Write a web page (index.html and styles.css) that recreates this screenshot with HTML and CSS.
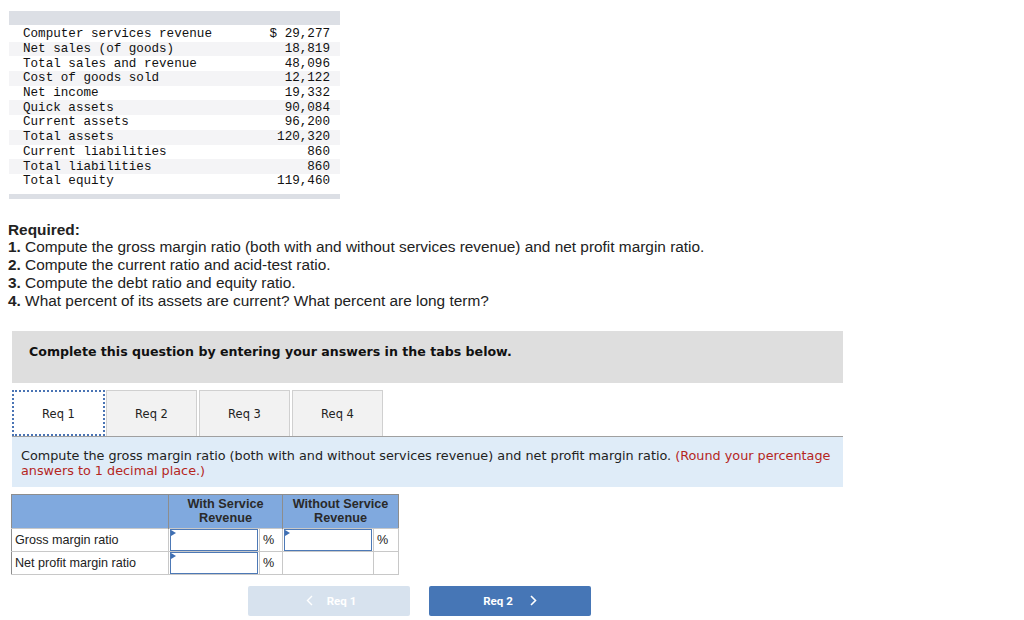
FILE: index.html
```html
<!DOCTYPE html>
<html lang="en">

<head>
    <meta charset="UTF-8">
    <meta name="viewport" content="width=device-width, initial-scale=1.0">
    <title>Ratio Analysis</title>
    <link rel="stylesheet" href="styles.css">
</head>

<body>

    <div class="data">
        <div class="data-bar"></div>
        <table class="data-table">
            <tr><td>Computer services revenue</td><td class="num">$ 29,277</td></tr>
            <tr><td>Net sales (of goods)</td><td class="num">18,819</td></tr>
            <tr><td>Total sales and revenue</td><td class="num">48,096</td></tr>
            <tr><td>Cost of goods sold</td><td class="num">12,122</td></tr>
            <tr><td>Net income</td><td class="num">19,332</td></tr>
            <tr><td>Quick assets</td><td class="num">90,084</td></tr>
            <tr><td>Current assets</td><td class="num">96,200</td></tr>
            <tr><td>Total assets</td><td class="num">120,320</td></tr>
            <tr><td>Current liabilities</td><td class="num">860</td></tr>
            <tr><td>Total liabilities</td><td class="num">860</td></tr>
            <tr><td>Total equity</td><td class="num">119,460</td></tr>
        </table>
        <div class="data-bar bottom"></div>
    </div>

    <div class="required">
        <p><b>Required:</b></p>
        <p><b>1.</b> Compute the gross margin ratio (both with and without services revenue) and net profit margin ratio.</p>
        <p><b>2.</b> Compute the current ratio and acid-test ratio.</p>
        <p><b>3.</b> Compute the debt ratio and equity ratio.</p>
        <p><b>4.</b> What percent of its assets are current? What percent are long term?</p>
    </div>

    <div class="question">
        <div class="notice">Complete this question by entering your answers in the tabs below.</div>

        <div class="tabs">
            <div class="tab active">Req 1</div>
            <div class="tab">Req 2</div>
            <div class="tab">Req 3</div>
            <div class="tab">Req 4</div>
        </div>

        <div class="instructions">
            Compute the gross margin ratio (both with and without services revenue) and net profit margin ratio.
            <span class="hint">(Round your percentage answers to 1 decimal place.)</span>
        </div>

        <table class="answers">
            <colgroup>
                <col class="c-label">
                <col class="c-input">
                <col class="c-pct">
                <col class="c-input">
                <col class="c-pct2">
            </colgroup>
            <tr class="head">
                <th class="label-col"></th>
                <th colspan="2">With Service<br>Revenue</th>
                <th colspan="2">Without Service<br>Revenue</th>
            </tr>
            <tr>
                <td class="label-col">Gross margin ratio</td>
                <td class="input-cell"><div class="field"></div></td>
                <td class="pct">%</td>
                <td class="input-cell"><div class="field"></div></td>
                <td class="pct">%</td>
            </tr>
            <tr>
                <td class="label-col">Net profit margin ratio</td>
                <td class="input-cell"><div class="field"></div></td>
                <td class="pct">%</td>
                <td class="input-cell"></td>
                <td class="pct"></td>
            </tr>
        </table>

        <div class="nav">
            <button class="nav-btn prev">
                <svg class="chev" width="7" height="11" viewBox="0 0 7 11"><path d="M6 1 L1.5 5.5 L6 10" fill="none" stroke="#fff" stroke-width="1.4"/></svg>
                Req 1
            </button>
            <button class="nav-btn next">
                Req 2
                <svg class="chev" width="7" height="11" viewBox="0 0 7 11"><path d="M1 1 L5.5 5.5 L1 10" fill="none" stroke="#fff" stroke-width="1.6"/></svg>
            </button>
        </div>
    </div>

</body>

</html>
```

FILE: styles.css
```css
body {
    margin: 0;
    background: #fff;
    color: #222;
}

/* data table */
.data {
    margin: 11px 0 0 9px;
    width: 331px;
}

.data-bar {
    height: 14px;
    background: #dcdfe5;
}

.data-bar.bottom {
    height: 5px;
    margin-top: 5px;
}

.data-table {
    width: 100%;
    border-collapse: collapse;
    margin-top: 2px;
    font-family: "Liberation Mono", "Courier New", monospace;
    font-size: 12.6px;
    color: #111;
}

.data-table td {
    height: 14.7px;
    padding: 0 0 0 14px;
    line-height: 14px;
}

.data-table tr:nth-child(even) {
    background: #f4f4f6;
}

.data-table td.num {
    text-align: right;
    padding: 0 10px 0 0;
}

/* required text */
.required {
    margin: 22px 0 0 8px;
    font-family: "Liberation Sans", Arial, sans-serif;
    font-size: 15.4px;
    line-height: 17.8px;
    color: #222;
}

.required p {
    margin: 0;
}

/* question area */
.question {
    margin: 21px 0 0 12px;
    width: 831px;
}

.notice {
    background: #dedede;
    height: 52px;
    box-sizing: border-box;
    padding: 13px 0 0 17px;
    font-family: "DejaVu Sans", Verdana, sans-serif;
    font-weight: bold;
    font-size: 12.6px;
    color: #111;
}

.tabs {
    display: flex;
    gap: 2px;
    margin-top: 7px;
    border-bottom: 1px solid #a0a0a0;
}

.tab {
    width: 91px;
    height: 46px;
    box-sizing: border-box;
    display: flex;
    align-items: center;
    justify-content: center;
    padding-top: 2px;
    background: #f2f2f2;
    border: 1px solid #d0d0d0;
    border-bottom: none;
    font-family: "DejaVu Sans", Verdana, sans-serif;
    font-size: 11.5px;
    color: #222;
}

.tab.active {
    width: 93px;
    background: #fff;
    border: 2px dotted #4a74b4;
    margin-right: -1px;
}

.instructions {
    background: #dfecf8;
    height: 50px;
    box-sizing: border-box;
    padding: 11px 5px 0 9px;
    font-family: "DejaVu Sans", Verdana, sans-serif;
    font-size: 12.8px;
    line-height: 15.5px;
    color: #222;
}

.hint {
    color: #b5261e;
}

/* answer table */
.answers {
    margin-top: 7px;
    margin-left: -1px;
    width: 387px;
    table-layout: fixed;
    border-collapse: collapse;
    font-family: "Liberation Sans", Arial, sans-serif;
    font-size: 12.6px;
    color: #222;
    border: 1px solid #8d8d8d;
}

.c-label {
    width: 157px;
}

.c-input {
    width: 91px;
}

.c-pct {
    width: 23px;
}

.c-pct2 {
    width: 25px;
}

.answers th {
    background: #80a9de;
    font-weight: bold;
    font-size: 12.7px;
    line-height: 14.5px;
    height: 33px;
    padding: 0;
    border-left: 1px solid #8d8d8d;
    color: #2a2a2a;
}

.answers th.label-col {
    border-left: none;
}

.answers td {
    height: 22px;
    padding: 0;
    border: 1px solid #c8c8c8;
}

.answers td.label-col {
    padding-left: 3px;
    border-left: none;
}

.answers td.pct {
    padding-left: 3px;
}

.field {
    position: relative;
    height: 20px;
    margin: 0 1px;
    border: 1px solid #4d79b6;
    background: #fff;
}

.field::before {
    content: "";
    position: absolute;
    left: 0;
    top: 0;
    border-top: 3px solid transparent;
    border-bottom: 3px solid transparent;
    border-left: 5px solid #3f6fb3;
}

/* nav buttons */
.nav {
    display: flex;
    gap: 19px;
    margin: 11px 0 0 236px;
}

.nav-btn {
    width: 162px;
    height: 30px;
    border: none;
    border-radius: 2px;
    display: flex;
    align-items: center;
    justify-content: center;
    gap: 14px;
    padding: 0;
    font-family: "Roboto", "Liberation Sans", sans-serif;
    font-weight: bold;
    font-size: 11.5px;
    color: #fff;
}

.nav-btn.prev {
    background: #d7e2ee;
    padding-left: 4px;
}

.nav-btn.next {
    background: #4676b6;
    gap: 17px;
}

.chev {
    display: block;
}
```
